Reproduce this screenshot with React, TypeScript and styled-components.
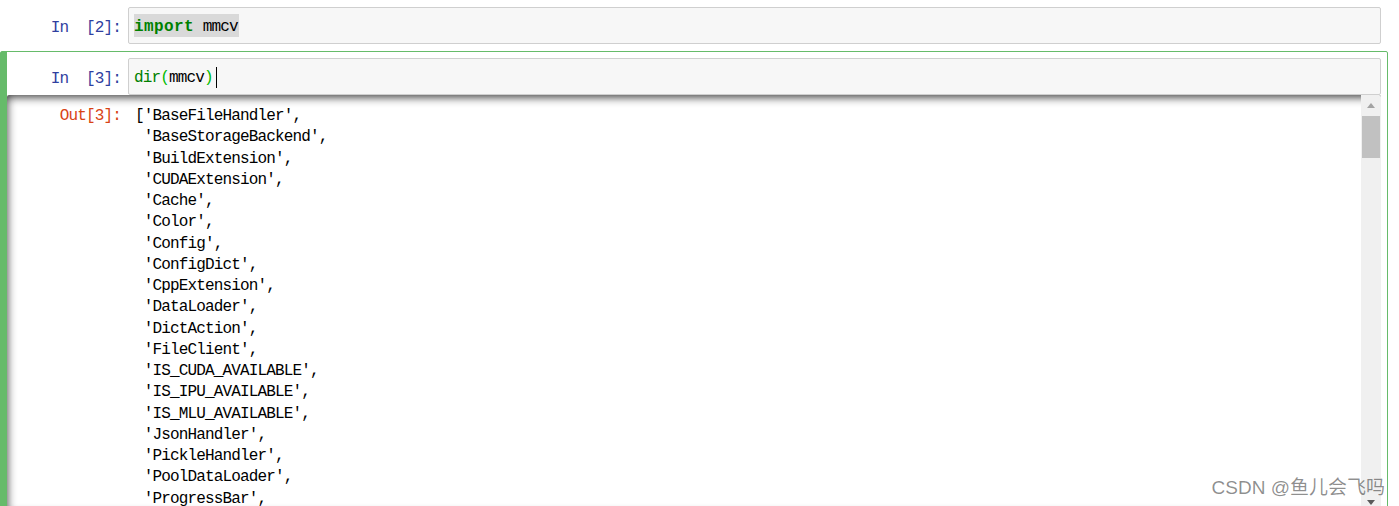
import React from 'react';
import styled, { createGlobalStyle } from 'styled-components';

const Global = createGlobalStyle`
  html, body { margin: 0; padding: 0; background: #fff; overflow: hidden; }
  body { font-family: "Liberation Mono", monospace; }
  #root { width: 1399px; height: 506px; }
`;

const Page = styled.div`
  position: relative;
  width: 1399px;
  height: 506px;
  overflow: hidden;
  background: #fff;
`;

const Notebook = styled.div`
  width: 1388px;
  display: flex;
  flex-direction: column;
`;

const Cell = styled.div<{ $selected?: boolean }>`
  box-sizing: border-box;
  display: flex;
  flex-direction: column;
  border: 1px solid ${(p) => (p.$selected ? '#66bb6a' : 'transparent')};
  border-radius: 2px;
  padding: 6px;
  background: ${(p) =>
    p.$selected
      ? 'linear-gradient(to right, #66bb6a 0px, #66bb6a 6px, transparent 6px, transparent 100%)'
      : 'transparent'};
`;

const Row = styled.div`
  display: flex;
  align-items: flex-start;
`;

const mono = `
  font-family: "Liberation Mono", "DejaVu Sans Mono", monospace;
  font-size: 16px;
  letter-spacing: -0.85px;
`;

const Prompt = styled.div<{ $out?: boolean }>`
  ${mono};
  box-sizing: border-box;
  width: 121px;
  flex: none;
  text-align: right;
  padding-right: 7px;
  padding-top: 11px;
  line-height: 21.25px;
  word-spacing: ${(p) => (p.$out ? '0' : '9px')};
  color: ${(p) => (p.$out ? '#d84315' : '#303f9f')};
  white-space: pre;
`;

const InputArea = styled.div`
  box-sizing: border-box;
  flex: 1;
  height: 37px;
  border: 1px solid #cfcfcf;
  border-radius: 2px;
  background: #f7f7f7;
  padding: 6px 5px 6px 5px;
`;

const CodeLine = styled.div`
  ${mono};
  box-sizing: border-box;
  height: 23px;
  padding-top: 3px;
  line-height: 20px;
  color: #000;
  white-space: pre;
`;

const Selected = styled.span`
  background: #d9d9d9;
  display: inline-block;
  vertical-align: top;
  margin-top: -3px;
  padding-top: 3px;
  line-height: 20px;
  padding-right: 1px;
`;

const Keyword = styled.span`
  color: #008000;
  font-weight: bold;
  letter-spacing: 0.4px;
`;

const Builtin = styled.span`
  color: #008000;
`;

const Bracket = styled.span`
  color: #00bb00;
`;

const Cursor = styled.span`
  display: inline-block;
  vertical-align: top;
  width: 1px;
  height: 21px;
  margin-top: -1px;
  margin-left: 3px;
  background: #000;
`;

const OutputScroll = styled.div`
  display: flex;
  height: 417px;
  border-radius: 2px;
  box-shadow: inset 0 2px 10px rgba(0, 0, 0, 0.8);
  overflow: hidden;
`;

const OutputBody = styled.div`
  flex: 1;
  display: flex;
  align-items: flex-start;
  overflow: hidden;
`;

const Pre = styled.pre`
  ${mono};
  margin: 0;
  padding: 11px 0 0 7px;
  line-height: 21.25px;
  color: #000;
  white-space: pre;
`;

const Scrollbar = styled.div`
  width: 20px;
  flex: none;
  display: flex;
  flex-direction: column;
  background: #f0f0f0;
`;

const ScrollButton = styled.div`
  height: 20px;
  flex: none;
  display: flex;
  align-items: center;
  justify-content: center;
`;

const Arrow = styled.div<{ $down?: boolean }>`
  width: 0;
  height: 0;
  border-left: 4.5px solid transparent;
  border-right: 4.5px solid transparent;
  ${(p) =>
    p.$down
      ? 'border-top: 5px solid #5a5a5a;'
      : 'border-bottom: 5px solid #a3a3a3;'}
`;

const Track = styled.div`
  flex: 1;
  padding: 1px 1px 0 1px;
`;

const Thumb = styled.div`
  height: 42px;
  background: #c1c1c1;
`;

const Watermark = styled.div`
  position: absolute;
  top: 475px;
  right: 14px;
  font-family: "Liberation Sans", "Noto Sans CJK SC", sans-serif;
  font-size: 19px;
  line-height: 26px;
  color: rgba(0, 0, 0, 0.45);
  white-space: nowrap;
`;

const names = [
  'BaseFileHandler',
  'BaseStorageBackend',
  'BuildExtension',
  'CUDAExtension',
  'Cache',
  'Color',
  'Config',
  'ConfigDict',
  'CppExtension',
  'DataLoader',
  'DictAction',
  'FileClient',
  'IS_CUDA_AVAILABLE',
  'IS_IPU_AVAILABLE',
  'IS_MLU_AVAILABLE',
  'JsonHandler',
  'PickleHandler',
  'PoolDataLoader',
  'ProgressBar',
];

const outputText = names
  .map((n, i) => (i === 0 ? `['${n}',` : ` '${n}',`))
  .join('\n');

export default function App() {
  return (
    <Page>
      <Global />
      <Notebook>
        <Cell>
          <Row>
            <Prompt>In [2]:</Prompt>
            <InputArea>
              <CodeLine>
                <Selected>
                  <Keyword>import</Keyword> mmcv
                </Selected>
              </CodeLine>
            </InputArea>
          </Row>
        </Cell>
        <Cell $selected>
          <Row>
            <Prompt>In [3]:</Prompt>
            <InputArea>
              <CodeLine>
                <Builtin>dir</Builtin>
                <Bracket>(</Bracket>mmcv<Bracket>)</Bracket>
                <Cursor />
              </CodeLine>
            </InputArea>
          </Row>
          <OutputScroll>
            <OutputBody>
              <Prompt $out>Out[3]:</Prompt>
              <Pre>{outputText}</Pre>
            </OutputBody>
            <Scrollbar>
              <ScrollButton>
                <Arrow />
              </ScrollButton>
              <Track>
                <Thumb />
              </Track>
              <ScrollButton>
                <Arrow $down />
              </ScrollButton>
            </Scrollbar>
          </OutputScroll>
        </Cell>
      </Notebook>
      <Watermark>CSDN @鱼儿会飞吗</Watermark>
    </Page>
  );
}
